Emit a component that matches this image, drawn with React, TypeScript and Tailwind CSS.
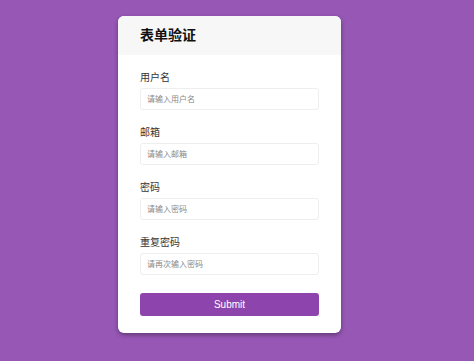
export default function App() {
  const fields = [
    { label: '用户名', placeholder: '请输入用户名', type: 'text' },
    { label: '邮箱', placeholder: '请输入邮箱', type: 'email' },
    { label: '密码', placeholder: '请输入密码', type: 'password' },
    { label: '重复密码', placeholder: '请再次输入密码', type: 'password' },
  ]

  return (
    <div
      className="min-h-screen bg-[#9657b5] pt-4 pb-6 pr-[15px] flex justify-center items-start"
      style={{ fontFamily: '"Liberation Sans", "Noto Sans CJK SC", sans-serif' }}
    >
      <div className="w-[223px] bg-white rounded-md overflow-hidden shadow-[0_2px_4px_rgba(0,0,0,0.35)]">
        {/* Header */}
        <div className="h-[39px] bg-[#f7f7f7] px-[22px] flex items-center">
          <h2 className="text-[14px] font-bold text-[#111]">表单验证</h2>
        </div>

        {/* Form */}
        <form className="px-[22px] pt-[16px] pb-[17px] flex flex-col gap-[16px]" onSubmit={(e) => e.preventDefault()}>
          {fields.map((f) => (
            <div key={f.label}>
              <label className="block text-[10px] leading-[14px] text-[#333] mb-[3px]">{f.label}</label>
              <input
                type={f.type}
                placeholder={f.placeholder}
                className="block w-full h-[22px] border border-[#eeeeee] rounded-[3px] px-[6px] text-[8px] text-[#333] placeholder:text-[#888] outline-none"
              />
            </div>
          ))}
          <button
            type="submit"
            className="mt-[2px] w-full h-[23px] bg-[#8e44ad] text-white text-[10px] rounded-[3px]"
          >
            Submit
          </button>
        </form>
      </div>
    </div>
  )
}
